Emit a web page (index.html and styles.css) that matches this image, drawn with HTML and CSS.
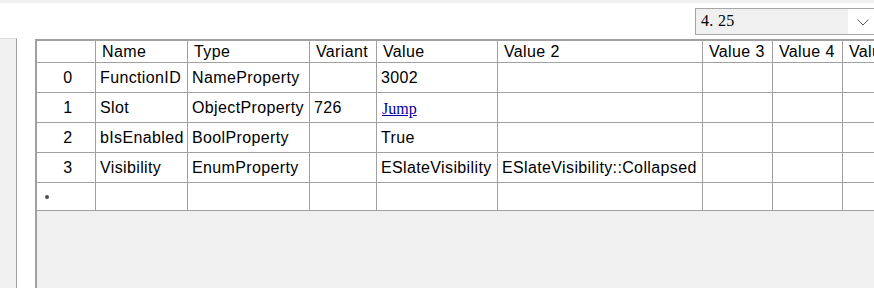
FILE: index.html
```html
<!DOCTYPE html>
<html>
<head>
<meta charset="utf-8">
<link rel="stylesheet" href="styles.css">
</head>
<body>
<div class="topstrip"></div>
<div class="toolbar">
  <div class="combo">
    <div class="combo-text">4. 25</div>
    <div class="combo-btn">
      <svg width="12" height="7" viewBox="0 0 12 7"><path d="M0.5 0.5 L6 6 L11.5 0.5" fill="none" stroke="#5a5a5a" stroke-width="1"/></svg>
    </div>
  </div>
</div>
<div class="main">
  <div class="sidepanel"></div>
  <div class="gridview">
    <div class="grid">
      <div class="hc idx"></div>
      <div class="hc">Name</div>
      <div class="hc">Type</div>
      <div class="hc">Variant</div>
      <div class="hc">Value</div>
      <div class="hc">Value 2</div>
      <div class="hc">Value 3</div>
      <div class="hc">Value 4</div>
      <div class="hc">Value 5</div>

      <div class="c idx">0</div>
      <div class="c">FunctionID</div>
      <div class="c">NameProperty</div>
      <div class="c"></div>
      <div class="c">3002</div>
      <div class="c"></div>
      <div class="c"></div>
      <div class="c"></div>
      <div class="c"></div>

      <div class="c idx">1</div>
      <div class="c">Slot</div>
      <div class="c">ObjectProperty</div>
      <div class="c">726</div>
      <div class="c"><a class="link" href="#">Jump</a></div>
      <div class="c"></div>
      <div class="c"></div>
      <div class="c"></div>
      <div class="c"></div>

      <div class="c idx">2</div>
      <div class="c">bIsEnabled</div>
      <div class="c">BoolProperty</div>
      <div class="c"></div>
      <div class="c">True</div>
      <div class="c"></div>
      <div class="c"></div>
      <div class="c"></div>
      <div class="c"></div>

      <div class="c idx">3</div>
      <div class="c">Visibility</div>
      <div class="c">EnumProperty</div>
      <div class="c"></div>
      <div class="c">ESlateVisibility</div>
      <div class="c">ESlateVisibility::Collapsed</div>
      <div class="c"></div>
      <div class="c"></div>
      <div class="c"></div>

      <div class="c new star"><span class="dot"></span></div>
      <div class="c new"></div>
      <div class="c new"></div>
      <div class="c new"></div>
      <div class="c new"></div>
      <div class="c new"></div>
      <div class="c new"></div>
      <div class="c new"></div>
      <div class="c new"></div>
    </div>
  </div>
</div>
</body>
</html>
```
FILE: styles.css
```css
html, body {
  margin: 0;
  padding: 0;
  width: 874px;
  height: 288px;
  overflow: hidden;
  background: #ffffff;
  font-family: "Liberation Sans", Arial, sans-serif;
  font-size: 16px;
  color: #000000;
}

.topstrip {
  height: 3px;
  background: #f0f0f0;
}

.toolbar {
  height: 35px;
  display: flex;
  padding-left: 695px;
  padding-top: 5px;
  box-sizing: border-box;
}

.combo {
  display: flex;
  height: 27px;
  width: 200px;
  flex: none;
  border: 1px solid #a6a6a6;
  box-sizing: border-box;
  background: #ffffff;
}

.combo-text {
  width: 152px;
  background: #f0f0f0;
  font-family: "Liberation Serif", "Times New Roman", serif;
  font-size: 16px;
  letter-spacing: 0.3px;
  line-height: 24px;
  padding-left: 5px;
  box-sizing: border-box;
}

.combo-btn {
  width: 30px;
  display: flex;
  align-items: center;
  justify-content: center;
  padding-top: 1px;
  box-sizing: border-box;
}

.main {
  display: flex;
  height: 250px;
}

.sidepanel {
  width: 17px;
  flex: none;
  background: #f0f0f0;
  border-top: 1px solid #dcdcdc;
  border-right: 1px solid #a0a0a0;
  box-sizing: border-box;
}

.gridview {
  margin-left: 18px;
  margin-top: 1px;
  flex: 1;
  background: #f0f0f0;
  border-top: 2px solid #a0a0a0;
  border-left: 2px solid #a0a0a0;
  overflow: hidden;
}

.grid {
  display: grid;
  grid-template-columns: 59px 92px 122px 67px 121px 205px 70px 70px 70px;
  grid-template-rows: 22px 30px 30px 30px 30px 28px;
  width: 876px;
}

.hc, .c {
  background: #ffffff;
  border-right: 1px solid #a0a0a0;
  border-bottom: 1px solid #a0a0a0;
  box-sizing: border-box;
  white-space: nowrap;
  overflow: hidden;
  display: flex;
  align-items: center;
  letter-spacing: 0.37px;
}

.hc {
  padding-left: 6px;
  padding-top: 1px;
}

.c {
  padding-left: 4px;
}

.idx {
  justify-content: center;
  padding-left: 4px;
}

.link {
  font-family: "Liberation Serif", "Times New Roman", serif;
  font-size: 16px;
  letter-spacing: 0;
  color: #0000a8;
  text-decoration: underline;
  padding-top: 3px;
  padding-left: 1px;
}

.star {
  padding-left: 8px;
  align-items: flex-start;
  padding-top: 12px;
}

.dot {
  display: block;
  width: 4px;
  height: 4px;
  border-radius: 50%;
  background: #505050;
}
```
